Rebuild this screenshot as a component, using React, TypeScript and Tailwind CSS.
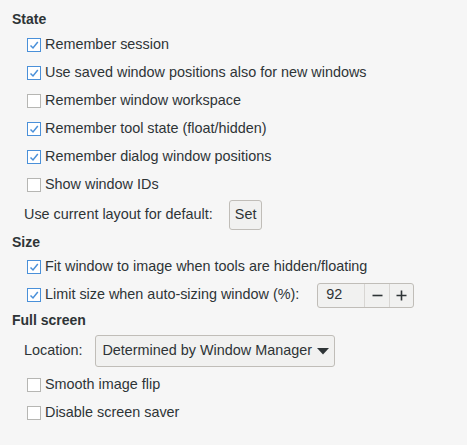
import React from 'react'

const font = { fontFamily: '"Liberation Sans", Arial, sans-serif' }

function CheckBox({ checked }: { checked: boolean }) {
  return (
    <span
      className={
        'inline-flex h-[14px] w-[14px] shrink-0 items-center justify-center border bg-white ' +
        (checked ? 'border-[#4a90d9]' : 'border-[#b6b6b3]')
      }
    >
      {checked && (
        <svg width="10" height="10" viewBox="0 0 10 10" fill="none">
          <path d="M1.5 5.5 L4 8 L8.8 2" stroke="#4a90d9" strokeWidth="1.5" />
        </svg>
      )}
    </span>
  )
}

function CheckRow({ label, checked }: { label: string; checked: boolean }) {
  return (
    <div className="flex h-[28px] items-center gap-[4px] pl-[15px]">
      <CheckBox checked={checked} />
      <span>{label}</span>
    </div>
  )
}

function Heading({ children, tall }: { children: React.ReactNode; tall?: boolean }) {
  return (
    <div className={(tall ? 'h-[23px]' : 'h-[22px]') + ' flex items-center text-[14px] font-bold'}>
      {children}
    </div>
  )
}

export default function App() {
  return (
    <div
      className="h-[445px] w-[467px] overflow-hidden bg-[#f6f6f6] pl-[12px] pt-[8px] text-[14.4px] text-[#2e3436]"
      style={font}
    >
      <Heading tall>State</Heading>
      <CheckRow checked label="Remember session" />
      <CheckRow checked label="Use saved window positions also for new windows" />
      <CheckRow checked={false} label="Remember window workspace" />
      <CheckRow checked label="Remember tool state (float/hidden)" />
      <CheckRow checked label="Remember dialog window positions" />
      <CheckRow checked={false} label="Show window IDs" />
      <div className="flex h-[32px] items-center pl-[12px]">
        <span>Use current layout for default:</span>
        <button className="ml-[16px] h-[30px] rounded-[3px] border border-[#c0bdb8] bg-[#f1f1f0] px-[5px]">
          Set
        </button>
      </div>
      <Heading>Size</Heading>
      <CheckRow checked label="Fit window to image when tools are hidden/floating" />
      <div className="flex h-[28px] items-center gap-[4px] pl-[15px]">
        <CheckBox checked />
        <span>Limit size when auto-sizing window (%):</span>
        <div className="ml-[14px] flex h-[25px] rounded-[3px] border border-[#c0bdb8] bg-[#f1f1f0]">
          <div className="flex w-[46px] items-center pl-[8px]">92</div>
          <div className="flex w-[25px] items-center justify-center border-l border-[#d8d6d3]">
            <svg width="11" height="11" viewBox="0 0 11 11">
              <path d="M0.5 5.5 H10.5" stroke="#2e3436" strokeWidth="1.6" />
            </svg>
          </div>
          <div className="flex w-[24px] items-center justify-center border-l border-[#d8d6d3]">
            <svg width="11" height="11" viewBox="0 0 11 11">
              <path d="M0.5 5.5 H10.5 M5.5 0.5 V10.5" stroke="#2e3436" strokeWidth="1.6" />
            </svg>
          </div>
        </div>
      </div>
      <Heading>Full screen</Heading>
      <div className="flex h-[40px] items-center pl-[12px]">
        <span>Location:</span>
        <button className="ml-[13px] flex h-[32px] items-center gap-[5px] rounded-[3px] border border-[#c0bdb8] bg-[#f1f1f0] pl-[6px] pr-[5px]">
          <span>Determined by Window Manager</span>
          <svg width="12" height="7" viewBox="0 0 12 7">
            <path d="M0 0 H12 L6 6.5 Z" fill="#2e3436" />
          </svg>
        </button>
      </div>
      <CheckRow checked={false} label="Smooth image flip" />
      <CheckRow checked={false} label="Disable screen saver" />
    </div>
  )
}
